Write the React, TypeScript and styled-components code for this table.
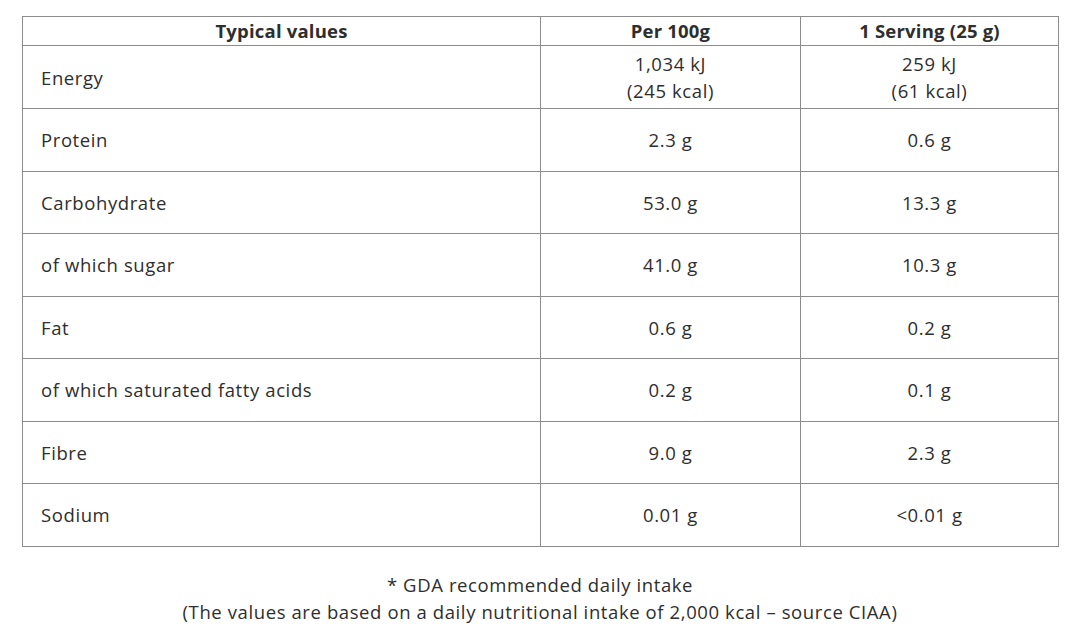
import styled, { createGlobalStyle } from 'styled-components';

const Global = createGlobalStyle`
  body {
    margin: 0;
    background: #fff;
    font-family: 'Open Sans', 'Liberation Sans', sans-serif;
    color: #2e2e2e;
  }
`;

const Page = styled.div`
  padding: 16px 22px 0 22px;
`;

const Table = styled.table`
  width: 1036px;
  border-collapse: collapse;
  table-layout: fixed;
  font-size: 18.5px;
  letter-spacing: 0.6px;
`;

const HeadCell = styled.th<{ w: number }>`
  width: ${({ w }) => w}px;
  height: 28px;
  padding: 0;
  border: 1px solid #8c8c8c;
  font-weight: 700;
  letter-spacing: 0.2px;
  text-align: center;
  line-height: 26px;
`;

const Cell = styled.td<{ center?: boolean; tall?: boolean }>`
  height: ${({ tall }) => (tall ? 62 : 61.5)}px;
  padding: 0 0 0 ${({ center }) => (center ? 0 : 18)}px;
  border: 1px solid #8c8c8c;
  text-align: ${({ center }) => (center ? 'center' : 'left')};
  line-height: 27px;
  vertical-align: middle;
`;

const Note = styled.div`
  margin-top: 24px;
  text-align: center;
  font-size: 18.5px;
  letter-spacing: 0.6px;
  line-height: 27px;
`;

const rows: [string, string, string][] = [
  ['Protein', '2.3 g', '0.6 g'],
  ['Carbohydrate', '53.0 g', '13.3 g'],
  ['of which sugar', '41.0 g', '10.3 g'],
  ['Fat', '0.6 g', '0.2 g'],
  ['of which saturated fatty acids', '0.2 g', '0.1 g'],
  ['Fibre', '9.0 g', '2.3 g'],
  ['Sodium', '0.01 g', '<0.01 g'],
];

export default function App() {
  return (
    <>
      <Global />
      <Page>
        <Table>
          <thead>
            <tr>
              <HeadCell w={517}>Typical values</HeadCell>
              <HeadCell w={259}>Per 100g</HeadCell>
              <HeadCell w={257}>1 Serving (25 g)</HeadCell>
            </tr>
          </thead>
          <tbody>
            <tr>
              <Cell tall>Energy</Cell>
              <Cell tall center>1,034 kJ<br />(245 kcal)</Cell>
              <Cell tall center>259 kJ<br />(61 kcal)</Cell>
            </tr>
            {rows.map(([name, per100, serving]) => (
              <tr key={name}>
                <Cell>{name}</Cell>
                <Cell center>{per100}</Cell>
                <Cell center>{serving}</Cell>
              </tr>
            ))}
          </tbody>
        </Table>
        <Note>
          * GDA recommended daily intake
          <br />
          (The values are based on a daily nutritional intake of 2,000 kcal – source CIAA)
        </Note>
      </Page>
    </>
  );
}
